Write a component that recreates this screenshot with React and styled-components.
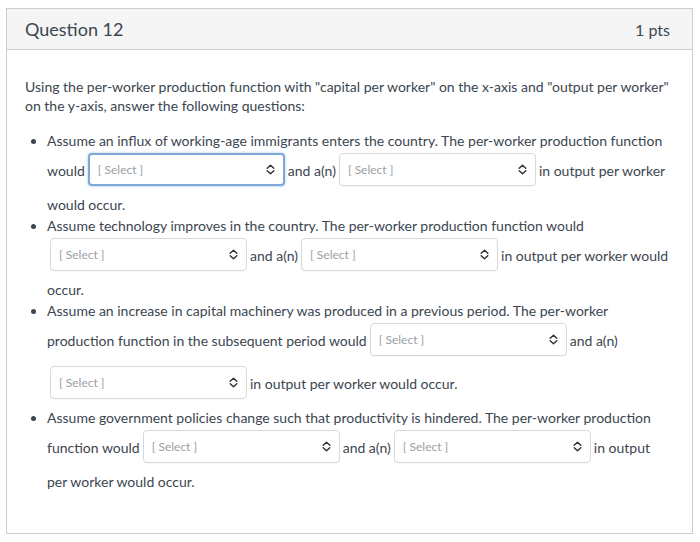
import React from "react";
import styled, { createGlobalStyle } from "styled-components";

const GlobalStyle = createGlobalStyle`
  html, body {
    margin: 0;
    padding: 0;
    background: #fff;
  }
  body {
    font-family: Lato, "Open Sans", "Liberation Sans", sans-serif;
    color: #3b4650;
  }
`;

const Page = styled.div`
  width: 700px;
  height: 542px;
  padding: 8px 7px 0 6px;
  box-sizing: border-box;
`;

const Card = styled.div`
  border: 1px solid #c7cdd1;
  height: 526px;
  box-sizing: border-box;
  display: flex;
  flex-direction: column;
`;

const Header = styled.div`
  display: flex;
  align-items: center;
  justify-content: space-between;
  height: 40px;
  padding: 0 22px 0 18px;
  background: #f5f5f5;
  border-bottom: 1px solid #c7cdd1;
  flex-shrink: 0;
`;

const Title = styled.span`
  font-size: 18px;
  font-weight: 400;
  color: #3b4650;
`;

const Points = styled.span`
  font-size: 16px;
  color: #3b4650;
`;

const Body = styled.div`
  padding: 27px 22px 0 18px;
  font-size: 14px;
  line-height: 19px;
`;

const Intro = styled.p`
  margin: 0 0 15px;
`;

const List = styled.ul`
  margin: 0;
  padding-left: 22px;
  list-style: disc;
`;

const Item = styled.li`
  line-height: 21px;
  margin-bottom: 0;
`;

const Field = styled.span`
  display: inline-flex;
  align-items: center;
  justify-content: space-between;
  box-sizing: border-box;
  width: 197px;
  height: 33px;
  padding: 0 8px 0 8px;
  margin: 2px 3px 8px 3px;
  vertical-align: middle;
  border: ${(p) => (p.$focused ? "2px solid #7fa8d9" : "1px solid #d7dadd")};
  border-radius: 4px;
  box-shadow: ${(p) =>
    p.$focused ? "0 0 3px rgba(90,140,210,0.55)" : "0 1px 1px rgba(0,0,0,0.04)"};
  background: #fff;
`;

const Placeholder = styled.span`
  font-size: 12px;
  color: #9a9fa3;
  line-height: 1;
`;

const Arrows = () => (
  <svg width="9" height="11" viewBox="0 0 9 11" fill="none">
    <path
      d="M1.2 4.2 L4.5 1.2 L7.8 4.2 M1.2 6.8 L4.5 9.8 L7.8 6.8"
      stroke="#333"
      strokeWidth="1.5"
      strokeLinecap="round"
      strokeLinejoin="round"
    />
  </svg>
);

const Select = ({ focused }) => (
  <Field $focused={focused}>
    <Placeholder>[ Select ]</Placeholder>
    <Arrows />
  </Field>
);

export default function App() {
  return (
    <>
      <GlobalStyle />
      <Page>
        <Card>
          <Header>
            <Title>Question 12</Title>
            <Points>1 pts</Points>
          </Header>
          <Body>
            <Intro>
              Using the per-worker production function with "capital per worker" on
              the x-axis and "output per worker" on the y-axis, answer the following
              questions:
            </Intro>
            <List>
              <Item>
                Assume an influx of working-age immigrants enters the country. The
                per-worker production function would
                <Select focused />
                and a(n)
                <Select />
                in output per worker would occur.
              </Item>
              <Item>
                Assume technology improves in the country. The per-worker production
                function would
                <Select />
                and a(n)
                <Select />
                in output per worker would occur.
              </Item>
              <Item>
                Assume an increase in capital machinery was produced in a previous
                period. The per-worker production function in the subsequent period
                would
                <Select />
                and a(n)
                <Select />
                in output per worker would occur.
              </Item>
              <Item>
                Assume government policies change such that productivity is hindered.
                The per-worker production function would
                <Select />
                and a(n)
                <Select />
                in output per worker would occur.
              </Item>
            </List>
          </Body>
        </Card>
      </Page>
    </>
  );
}
